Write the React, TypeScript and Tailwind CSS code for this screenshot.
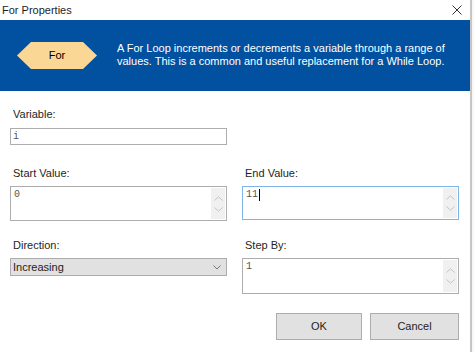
import React from "react";

const font = { fontFamily: '"Liberation Sans", Arial, sans-serif' };

const Spinner = () => (
  <div className="flex w-[14px] flex-col items-center justify-center gap-[6px] self-stretch bg-[#f0f0f0]">
    <svg width="9" height="5" viewBox="0 0 9 5">
      <path d="M0.5 4.5 L4.5 0.8 L8.5 4.5" fill="none" stroke="#c4c4c4" strokeWidth="1" />
    </svg>
    <svg width="9" height="5" viewBox="0 0 9 5">
      <path d="M0.5 0.5 L4.5 4.2 L8.5 0.5" fill="none" stroke="#c4c4c4" strokeWidth="1" />
    </svg>
  </div>
);

const Label = ({ text }: { text: string }) => (
  <div className="pl-[3px] text-[11px] leading-[14px] text-[#1e1e1e]">{text}</div>
);

const NumberBox = ({
  value,
  focused,
  height,
  caret,
}: {
  value: string;
  focused?: boolean;
  height: string;
  caret?: boolean;
}) => (
  <div
    className={`flex w-[217px] border bg-white p-px ${height} ${
      focused ? "border-[#7eb4ea]" : "border-[#adadad]"
    }`}
  >
    <div className="flex flex-1 items-start pl-[2px] pt-[1px] font-['Liberation_Mono',monospace] text-[10px] leading-[12px] text-[#555]">
      {value}
      {caret && <span className="ml-px inline-block h-[12px] w-px bg-black" />}
    </div>
    <Spinner />
  </div>
);

export default function App() {
  return (
    <div className="flex h-[352px] w-[474px] overflow-hidden bg-white" style={font}>
      <div className="flex w-[470px] flex-col">
        <div className="flex h-[20px] items-center justify-between pl-[2px] pr-[8px]">
          <span className="text-[11px] text-[#1e1e1e]">For Properties</span>
          <svg width="10" height="10" viewBox="0 0 10 10">
            <path d="M0.5 0.5 L9.5 9.5 M9.5 0.5 L0.5 9.5" stroke="#333" strokeWidth="1" />
          </svg>
        </div>

        <div className="flex h-[71px] items-center bg-[#0151a0] pl-[17px]">
          <div className="relative flex h-[27px] w-[80px] items-center justify-center">
            <svg className="absolute inset-0" width="80" height="27" viewBox="0 0 80 27">
              <polygon points="14,0 66,0 80,13.5 66,27 14,27 0,13.5" fill="#fbd796" />
            </svg>
            <span className="relative text-[11px] text-black">For</span>
          </div>
          <p className="ml-[20px] mt-[-2px] w-[330px] text-[11px] leading-[13px] text-white">
            A For Loop increments or decrements a variable through a range of values. This is a
            common and useful replacement for a While Loop.
          </p>
        </div>

        <div className="flex flex-col pl-[10px] pt-[16px]">
          <Label text="Variable:" />
          <div className="mt-[7px] flex h-[17px] w-[217px] items-center border border-[#adadad] bg-white pl-[2px] font-['Liberation_Mono',monospace] text-[10px] text-[#555]">
            i
          </div>

          <div className="mt-[21px] grid grid-cols-[217px_217px] gap-x-[15px]">
            <div className="flex flex-col">
              <Label text="Start Value:" />
              <div className="mt-[6px]">
                <NumberBox value="0" height="h-[35px]" />
              </div>
            </div>
            <div className="flex flex-col">
              <Label text="End Value:" />
              <div className="mt-[6px]">
                <NumberBox value="11" height="h-[34px]" focused caret />
              </div>
            </div>
          </div>

          <div className="mt-[17px] grid grid-cols-[217px_217px] gap-x-[15px]">
            <div className="flex flex-col">
              <Label text="Direction:" />
              <div className="mt-[6px] flex h-[18px] w-[217px] items-center justify-between border border-[#adadad] bg-[#e1e1e1] pl-[2px] pr-[5px] text-[11px] text-[#1e1e1e]">
                <span>Increasing</span>
                <svg width="8" height="5" viewBox="0 0 8 5">
                  <path d="M0.5 0.5 L4 4 L7.5 0.5" fill="none" stroke="#777" strokeWidth="1" />
                </svg>
              </div>
            </div>
            <div className="flex flex-col">
              <Label text="Step By:" />
              <div className="mt-[6px]">
                <NumberBox value="1" height="h-[36px]" />
              </div>
            </div>
          </div>

          <div className="mt-[19px] flex w-[449px] justify-end gap-[8px]">
            <button className="h-[27px] w-[86px] border border-[#adadad] bg-[#e1e1e1] text-[11px] text-[#1e1e1e]">
              OK
            </button>
            <button className="h-[27px] w-[89px] border border-[#adadad] bg-[#e1e1e1] text-[11px] text-[#1e1e1e]">
              Cancel
            </button>
          </div>
        </div>
      </div>
      <div className="w-[2px] bg-[#c6c6c6]" />
      <div className="flex-1 bg-[#f7f7f7]" />
    </div>
  );
}
